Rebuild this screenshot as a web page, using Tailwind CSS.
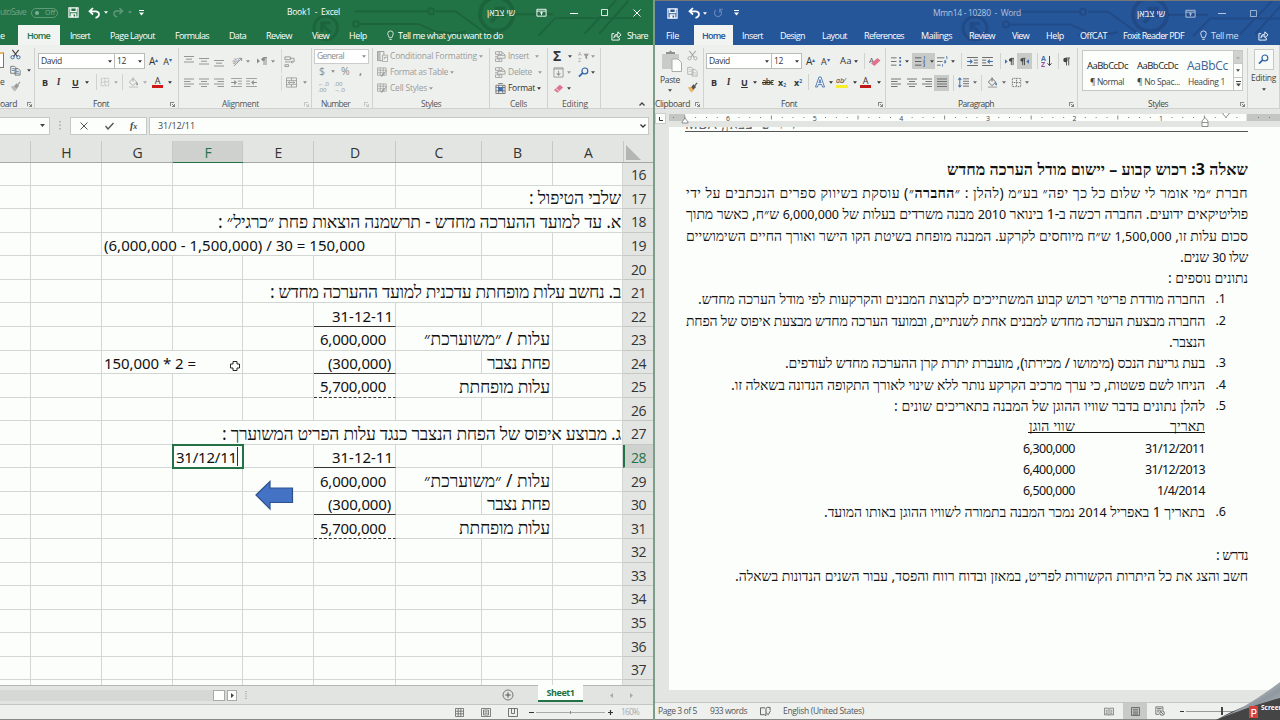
<!DOCTYPE html>
<html lang="en">
  <head>
    <meta charset="UTF-8" />
    <meta name="viewport" content="width=device-width, initial-scale=1.0" />
    <script src="https://cdn.jsdelivr.net/npm/@tailwindcss/browser@4"></script>
    <title>Book1 - Excel</title>
  </head>
  <body class="w-[1280px] h-[720px] overflow-hidden bg-[#e3e5e3] font-['Open_Sans','Noto_Sans',sans-serif] text-[8.5px] leading-none text-[#444]">

    <!-- icons -->
    <svg class="hidden">
      <symbol id="caret" viewBox="0 0 5 3"><path d="M0 0h5L2.500 3z" fill="currentColor"/></symbol>
      <symbol id="launch" viewBox="0 0 6 6"><path d="M.5 5V.5H5M2.500 2.500l2.500 2.500M5.500 2.500v3h-3" fill="none" stroke="currentColor" stroke-width=".8"/></symbol>
      <symbol id="save" viewBox="0 0 12 12"><path d="M1 1h10v10H1zM3 1v4h6V1M3.500 11V7.500h5V11" fill="none" stroke="currentColor" stroke-width="1.300"/><path d="M4 8h2v3H4z" fill="currentColor"/></symbol>
      <symbol id="undo" viewBox="0 0 12 12"><path d="M5 1L1.500 4.300 5 7.500M1.500 4.300H8q3 .3 3 3t-3.500 3.500" fill="none" stroke="currentColor" stroke-width="1.700"/></symbol>
      <symbol id="redo" viewBox="0 0 12 12"><path d="M7 1l3.500 3.300L7 7.500M10.500 4.300H4q-3 .3-3 3t3.500 3.500" fill="none" stroke="currentColor" stroke-width="1.500"/></symbol>
      <symbol id="repeat" viewBox="0 0 12 12"><path d="M8.500 2.500a4.300 4.300 0 1 1-5 0M8 5.500V1.500h4" fill="none" stroke="currentColor" stroke-width="1.400"/></symbol>
      <symbol id="qat" viewBox="0 0 5 6"><path d="M0 .5h5" stroke="currentColor"/><path d="M0 2.500h5L2.500 5.500z" fill="currentColor"/></symbol>
      <symbol id="ribbonopt" viewBox="0 0 12 12"><path d="M1 2.500h10v7.500H1zM1 4.500h10M6 9V5.500M4.300 7L6 5.500 7.700 7" fill="none" stroke="currentColor"/></symbol>
      <symbol id="min" viewBox="0 0 8 8"><path d="M0 4.500h8" stroke="currentColor"/></symbol>
      <symbol id="max" viewBox="0 0 8 8"><path d="M.5 .5h7v7h-7z" fill="none" stroke="currentColor"/></symbol>
      <symbol id="close" viewBox="0 0 8 8"><path d="M.5 .5l7 7M7.500 .5l-7 7" stroke="currentColor"/></symbol>
      <symbol id="bulb" viewBox="0 0 8 12"><path d="M2.500 8.500C2.500 7 .8 6 .8 4a3.200 3.200 0 0 1 6.400 0c0 2-1.700 3-1.700 4.500zM2.700 10.500h2.600" fill="none" stroke="currentColor" stroke-width=".9"/></symbol>
      <symbol id="share" viewBox="0 0 12 12"><path d="M3.500 4H1v7h8V8.500M3 8.500q.5-4 4.500-4V2L11 5.300 7.500 8.500V6.300Q4.500 6 3 8.500z" fill="none" stroke="currentColor"/></symbol>
      <symbol id="cut" viewBox="0 0 12 12"><path d="M2.500 1l5.500 7M9.500 1L4 8" stroke="currentColor" stroke-width="1.200"/><g fill="none" stroke="var(--c)"><circle cx="2.800" cy="9" r="1.800"/><circle cx="9.200" cy="9" r="1.800"/></g></symbol>
      <symbol id="copy" viewBox="0 0 12 12"><path d="M.8 1.500H5l1.500 1.500v6H.8zM5.500 4H9l2 2v5H5.500z" fill="#f2f4f2" stroke="currentColor" stroke-width=".9"/><path d="M2 4h3M2 6h3M6.800 7H9.500M6.800 9h3" stroke="var(--c)" stroke-width=".8"/></symbol>
      <symbol id="brush" viewBox="0 0 12 12"><path d="M1 6l4-1 3 3-2.500 3.500Q3 10.500 1 6z" fill="var(--c)"/><path d="M5.500 5.500L7 3.500l2 2-2 2zM8.500 4l2.500-3" fill="currentColor" stroke="currentColor" stroke-width="1.300"/></symbol>
      <symbol id="borders" viewBox="0 0 12 12"><path d="M1.500 1.500h9v9h-9zM6 1.500v9M1.500 6h9" fill="none" stroke="currentColor" stroke-dasharray="1 .8"/></symbol>
      <symbol id="bucket" viewBox="0 0 12 12"><path d="M5.500 1.500l4 4-4 4-4-4zM5.500 5V.5" fill="none" stroke="currentColor"/><path d="M9.500 5q1.800 2.500 1 4-1.500.5-1.500-1z" fill="var(--c)"/><path d="M1 11h10" stroke="currentColor" stroke-width="1.500" opacity=".45"/></symbol>
      <symbol id="left" viewBox="0 0 10 10"><path d="M0 1h10M0 3.500h6.500M0 6h10M0 8.500h6.500" stroke="currentColor" stroke-width=".9"/></symbol>
      <symbol id="center" viewBox="0 0 10 10"><path d="M0 1h10M2 3.500h6M0 6h10M2 8.500h6" stroke="currentColor" stroke-width=".9"/></symbol>
      <symbol id="right" viewBox="0 0 10 10"><path d="M0 1h10M3.500 3.500H10M0 6h10M3.500 8.500H10" stroke="currentColor" stroke-width=".9"/></symbol>
      <symbol id="justify" viewBox="0 0 10 10"><path d="M0 1h10M0 3.500h10M0 6h10M0 8.500h10" stroke="currentColor" stroke-width=".9"/></symbol>
      <symbol id="three" viewBox="0 0 10 7"><path d="M0 .5h10M2 3.200h6M0 6h10" stroke="currentColor" stroke-width=".9"/></symbol>
      <symbol id="indent" viewBox="0 0 12 10"><path d="M0 .5h12M0 9.500h12M7.500 3.500H12M7.500 6.500H12" stroke="currentColor" stroke-width=".9"/><path d="M0 5h5M3.500 3l2 2-2 2" fill="none" stroke="var(--c)" stroke-width="1.300"/></symbol>
      <symbol id="outdent" viewBox="0 0 12 10"><path d="M0 .5h12M0 9.500h12M0 3.500h4.500M0 6.500h4.500" stroke="currentColor" stroke-width=".9"/><path d="M12 5H7M8.500 3l-2 2 2 2" fill="none" stroke="var(--c)" stroke-width="1.300"/></symbol>
      <symbol id="orient" viewBox="0 0 12 12"><path d="M2 11l8.500-8.500M7.500 2.500h3v3" fill="none" stroke="currentColor"/><text x="0" y="8" font-size="7" fill="currentColor" transform="rotate(-35 3 6)">ab</text></symbol>
      <symbol id="ltr" viewBox="0 0 10 10"><path d="M0 2.500L3 5 0 7.500z" fill="var(--c)"/><path d="M7 9V1.500M9 9V1.500M10 1.500H6.500" stroke="currentColor" fill="none"/><circle cx="6.200" cy="3.200" r="1.800" fill="currentColor"/></symbol>
      <symbol id="rtl" viewBox="0 0 10 10"><path d="M10 2.500L7 5l3 2.500z" fill="var(--c)"/><path d="M3 9V1.500M5 9V1.500M6 1.500H2.500" stroke="currentColor" fill="none"/><circle cx="2.200" cy="3.200" r="1.800" fill="currentColor"/></symbol>
      <symbol id="pilcrow" viewBox="0 0 8 10"><path d="M4 9.500V1M6.500 9.500V1M8 1H3.500" stroke="currentColor" fill="none"/><circle cx="2.800" cy="3.300" r="2.500" fill="currentColor"/></symbol>
      <symbol id="wrap" viewBox="0 0 12 12"><path d="M1 1h6v3H1zM1 6.500h6M1 9.500h4v2H1zM7 2.500h4v4H7.500M9 5L7.500 6.500 9 8" fill="none" stroke="currentColor" stroke-width=".9"/></symbol>
      <symbol id="merge" viewBox="0 0 12 12"><path d="M.5 1h11v10H.5zM.5 4h11M.5 8h11M6 1v3M6 8v3M2.500 6h7M4 5L2.500 6 4 7M8 5l1.500 1L8 7" fill="none" stroke="currentColor" stroke-width=".8"/></symbol>
      <symbol id="condfmt" viewBox="0 0 12 12"><path d="M.5 .5h7v10h-7z" fill="none" stroke="currentColor"/><path d="M1 1h3v9H1z" fill="currentColor" opacity=".6"/><path d="M6 4.500h5.500v7H6zM7.500 9.500l2.500-3.500M7 7h3.500" fill="#f2f4f2" stroke="currentColor" stroke-width=".8"/></symbol>
      <symbol id="tablefmt" viewBox="0 0 12 12"><path d="M.5 1h9.500v8H.5zM.5 3.500H10M.5 6.300H8M3.500 1v8M6.800 1v6" fill="none" stroke="currentColor" stroke-width=".8"/><path d="M11.500 3L7 9l-3 2.500L5.500 8z" fill="currentColor"/></symbol>
      <symbol id="cells" viewBox="0 0 12 12"><path d="M.5 .8h4v3h-4zM4.500 .8h3v3h-3M3 4.800h8v3H3zM.5 8.500h4v3h-4zM4.500 8.500h3v3h-3" fill="none" stroke="currentColor" stroke-width=".9"/><path d="M0 6.300h3M8 1.500l3 3" stroke="currentColor"/></symbol>
      <symbol id="format" viewBox="0 0 12 12"><path d="M1 2.500h10v9H1zM1 5h10M1 8.500h10M4 2.500v9M8.500 2.500v9M3.500 .6h5" fill="none" stroke="#666" stroke-width=".9"/><path d="M3.500 4.500h5v4.500h-5z" fill="#3f6fae"/></symbol>
      <symbol id="sortf" viewBox="0 0 12 12"><text x="0" y="5.500" font-size="6" fill="currentColor">A</text><text x="0" y="11.500" font-size="6" fill="currentColor">Z</text><path d="M6 3h6L10 6v3L8 8V6z" fill="currentColor"/></symbol>
      <symbol id="sortw" viewBox="0 0 12 12"><text x="0" y="5.800" font-size="7" font-weight="700" fill="#3f6fae">A</text><text x="0" y="12" font-size="7" font-weight="700" fill="#9a4f9a">Z</text><path d="M8.500 1v9.500M6.500 8.300l2 2.200 2-2.200" fill="none" stroke="#444"/></symbol>
      <symbol id="filldn" viewBox="0 0 12 12"><path d="M1 1h10v10H1z" fill="none" stroke="currentColor"/><path d="M1 1h10v2H1z" fill="currentColor" opacity=".6"/><path d="M6 4v5M4 7l2 2 2-2" fill="none" stroke="currentColor" stroke-width="1.200"/></symbol>
      <symbol id="find" viewBox="0 0 12 12"><circle cx="7.500" cy="4.300" r="3.200" fill="none" stroke="#2f64a8" stroke-width="1.300"/><path d="M5 6.700L1 10.500" stroke="#2f64a8" stroke-width="1.800"/></symbol>
      <symbol id="eraser" viewBox="0 0 12 12"><path d="M1 7.500L7.500 2l3.500 3-6 5.500z" fill="#e0748f"/><path d="M3 6l4 3" stroke="#fff" stroke-width=".8"/></symbol>
      <symbol id="clear" viewBox="0 0 12 12"><text x="0" y="7.500" font-size="8" fill="#555">A</text><path d="M2 8.500L8.500 3l3 2.500-6 5.500z" fill="#e0748f"/></symbol>
      <symbol id="bullets" viewBox="0 0 12 12"><path d="M0 2h6M0 6h6M0 10h6" stroke="#666"/><path d="M9 1h2v2H9zM9 5h2v2H9zM9 9h2v2H9z" fill="#3f6fae"/></symbol>
      <symbol id="numbers" viewBox="0 0 12 12"><path d="M0 2h7M0 6h7M0 10h7" stroke="#555"/><path d="M9.500 .5h1v3M9 4.500h1.500v1.500H9.500v1.300h1.500M9 8.500h1.500v3H9M9.500 10h1" fill="none" stroke="#3f6fae" stroke-width=".8"/></symbol>
      <symbol id="multi" viewBox="0 0 12 12"><path d="M0 2h8M0 6h6M0 10h4" stroke="#666"/><path d="M10 .5h.8v3M8 5h1.500v2.500H8V6.300h1.500M6 9v2.500" fill="none" stroke="#3f6fae" stroke-width=".9"/></symbol>
      <symbol id="spacing" viewBox="0 0 12 12"><path d="M2 1v10M.3 3L2 1l1.700 2M.3 9L2 11l1.700-2" fill="none" stroke="#3f6fae" stroke-width="1.100"/><path d="M5.500 2H12M5.500 4.700H12M5.500 7.300H12M5.500 10H12" stroke="#666"/></symbol>
      <symbol id="clip" viewBox="0 0 20 22"><path d="M0 4h17v15H0z" fill="#c9cbc9"/><path d="M4 4V2h3q1.500-3 3 0h3v2H4z" fill="#8e908e"/><path d="M10 9h6l3.500 3.500v9H10z" fill="#fcfcfc" stroke="#aaa"/></symbol>
      <symbol id="book" viewBox="0 0 12 10"><path d="M.5 1H5l1 1 1-1h4.500v8H7L6 9.500 5 9H.5zM6 2v7M2 3.500h2.500M2 5.500h2.500M2 7.200h2.500M7.500 3.500H10M7.500 5.500H10M7.500 7.200H10" fill="none" stroke="currentColor" stroke-width=".8"/></symbol>
      <symbol id="proof" viewBox="0 0 12 12"><path d="M5.500 2H.5v7.500H5l1.500 1V2.500L8 1.500h3v3M7 7.500l2 2L11.500 5" fill="none" stroke="currentColor"/></symbol>
      <symbol id="pageview" viewBox="0 0 10 10"><path d="M.5 .5h9v9h-9zM2 2.500h6M2 4.500h6M2 6.500h6M2 8h6" fill="none" stroke="currentColor" stroke-width=".9"/></symbol>
      <symbol id="web" viewBox="0 0 12 12"><path d="M9.500 5V1H1v9h4M2.500 3h5.500M2.500 5H7M2.500 7H5" fill="none" stroke="currentColor" stroke-width=".9"/><circle cx="8.500" cy="8.500" r="2.700" fill="none" stroke="currentColor"/><path d="M7 7l3 3" stroke="currentColor"/></symbol>
      <symbol id="gridview" viewBox="0 0 9 9"><path d="M.5 .5h8v8h-8zM.5 3.200h8M.5 5.800h8M3.200 .5v8M5.800 .5v8" fill="none" stroke="currentColor" stroke-width=".8"/></symbol>
      <symbol id="pagelay" viewBox="0 0 10 9"><path d="M.5 .5h9v8h-9zM2.500 2h5v5h-5zM3.500 3.800h3M3.500 5.300h3" fill="none" stroke="currentColor" stroke-width=".8"/></symbol>
      <symbol id="pagebrk" viewBox="0 0 10 9"><path d="M.5 .5h9v8h-9zM3.500 .5v5M6.500 .5v5h-3" fill="none" stroke="currentColor" stroke-width=".9"/></symbol>
      <!-- circuit pattern behind both title bars -->
      <symbol id="circuit" viewBox="0 0 350 45"><g fill="none" stroke="#000" stroke-opacity=".13" stroke-width="2">
        <path d="M45 11h74M128 11h20l30 22 18 2M50 24H110l18 8 25 2M118 35h20l20-3"/><circle cx="123" cy="11" r="3"/><circle cx="46" cy="24" r="3"/>
        <circle cx="190" cy="14" r="17" stroke-width="4"/><path d="M184 22l12-12M188 8h9v9" stroke-width="4"/><circle cx="15" cy="28" r="12" stroke-width="3"/><path d="M20 33l-9-9M11 32v-9h9" stroke-width="3"/>
        <path d="M233 36l17-18h85M280 34L312 0M295 34L325 0M208 14h40"/></g></symbol>
    </svg>

    <div class="flex h-full">
      <!-- ================= Excel ================= -->
      <section class="w-[655px] h-full flex flex-col border-r-2 border-[#7d9c8a] bg-[#e3e5e3] [--c:#8a8c8a]">
        <header class="relative h-[45px] bg-[#217346] text-white">
          <svg class="absolute left-[311px] top-0 w-[342px] h-[45px]" preserveAspectRatio="none"><use href="#circuit"/></svg>
          <div class="relative h-[25px] grid items-center grid-cols-[31px_37px_20px_16px_9px_15px_11px_148px_200px_49px_34px_31px_32px_1fr]">
            <span data-w="26" class="text-[#6fa287]">utoSave</span>
            <span class="flex items-center w-[27px] h-[10px] rounded-full border border-[#5f9a7a] text-[7px] text-[#7fae95] gap-[6px] pl-[3px]"><i class="size-1 rounded-full bg-[#7fae95]"></i>Off</span>
            <svg class="size-[11px]"><use href="#save"/></svg>
            <svg class="size-3"><use href="#undo"/></svg>
            <svg class="w-[4px] h-[3px]"><use href="#caret"/></svg>
            <svg class="size-[11px] text-[#5f9a7a]"><use href="#redo"/></svg>
            <svg class="w-[4px] h-[3px] text-[#5f9a7a]"><use href="#caret"/></svg>
            <svg class="w-[5px] h-[6px]"><use href="#qat"/></svg>
            <span data-w="53" class="whitespace-pre">Book1  -  Excel</span>
            <span data-w="28" dir="rtl" class="text-[9px]">שי צבאן</span>
            <svg class="size-[11px]"><use href="#ribbonopt"/></svg>
            <svg class="size-2"><use href="#min"/></svg>
            <svg class="size-[7px]"><use href="#max"/></svg>
            <svg class="size-[8px]"><use href="#close"/></svg>
          </div>
          <nav class="relative h-5 grid items-center grid-cols-[18px_52px_40px_65px_54px_37px_46px_37px_40px_9px_213px_16px_1fr] text-[9px]">
            <span>e</span>
            <span class="w-[42px] h-5 bg-[#f2f4f2] text-[#217346] font-semibold flex items-center pl-[9px]"><b data-w="23" class="font-semibold">Home</b></span>
            <span data-w="20">Insert</span><span data-w="45">Page Layout</span><span data-w="34">Formulas</span><span data-w="17">Data</span><span data-w="26">Review</span><span data-w="17">View</span><span data-w="18">Help</span>
            <svg class="w-[7px] h-[11px] -ml-[2px]"><use href="#bulb"/></svg>
            <span data-w="105">Tell me what you want to do</span>
            <svg class="size-[11px]"><use href="#share"/></svg>
            <span data-w="21">Share</span>
          </nav>
        </header>

        <div class="flex h-[64px] bg-[#eef0ee] border-b border-[#d0d2d0]">
          <div class="w-[35px] flex flex-col border-r border-[#d0d2d0] my-[2px] mt-[3px] -mb-px">
            <div class="flex flex-1">
              <div class="w-[10px] pt-[4px] flex flex-col gap-[10px]">
                <span class="w-1 h-4 border border-l-0 border-t-2 border-[#777] border-t-[#e8b667] bg-white"></span><span>e</span>
              </div>
              <div class="flex flex-col pt-[1px] gap-[5px]">
                <svg class="size-[11px] text-[#444] [--c:#2f64a8]"><use href="#cut"/></svg>
                <div class="flex items-center gap-[6px]"><svg class="size-[11px] text-[#666] [--c:#2f64a8]"><use href="#copy"/></svg><svg class="w-1 h-[3px]"><use href="#caret"/></svg></div>
                <svg class="size-[11px] text-[#999] [--c:#bbb]"><use href="#brush"/></svg>
              </div>
            </div>
            <div class="h-[10px] flex items-center gap-[10px]"><span data-w="17">oard</span><svg class="size-[5px]"><use href="#launch"/></svg></div>
          </div>

          <div class="w-[144px] flex flex-col border-r border-[#d0d2d0] mt-[3px] -mb-px pl-[3px]">
            <div class="flex items-center h-[16px] mt-[5px] text-[#333]">
              <div class="w-[77px] h-4 border border-[#bbb] bg-white flex items-center justify-between px-[2px]"><span data-w="21">David</span><svg class="w-1 h-[3px]"><use href="#caret"/></svg></div>
              <div class="w-[30px] h-4 border border-l-0 border-[#bbb] bg-white flex items-center justify-between px-[2px]"><span data-w="9">12</span><svg class="w-1 h-[3px]"><use href="#caret"/></svg></div>
              <span class="ml-[4px] text-[10px]">A<sup class="text-[6px] text-[#2f64a8]">▴</sup></span><span class="ml-[5px] text-[9px]">A<sup class="text-[6px] text-[#2f64a8]">▾</sup></span>
            </div>
            <div class="grid items-center h-[26px] grid-cols-[15px_15px_13px_11px_4px_14px_8px_6px_15px_9px_14px_1fr] pl-[4px] text-[9px] text-[#333]">
              <b>B</b><i class="font-serif font-bold">I</i><u class="font-bold">U</u><svg class="w-1 h-[3px]"><use href="#caret"/></svg>
              <i class="w-px h-4 bg-[#d0d2d0]"></i><svg class="size-[10px] text-[#aaa]"><use href="#borders"/></svg><svg class="w-1 h-[3px] text-[#aaa]"><use href="#caret"/></svg>
              <i class="w-px h-4 bg-[#d0d2d0]"></i><svg class="size-[11px] text-[#aaa]"><use href="#bucket"/></svg><svg class="w-1 h-[3px] text-[#aaa]"><use href="#caret"/></svg>
              <span class="w-[11px] border-b-[3px] border-[#d01818] text-center text-[9px] leading-[9px]">A</span><svg class="w-1 h-[3px] ml-[2px]"><use href="#caret"/></svg>
            </div>
            <div class="h-[10px] mt-[4px] grid items-center grid-cols-[55px_77px_1fr]"><span></span><span data-w="16">Font</span><svg class="size-[5px]"><use href="#launch"/></svg></div>
          </div>

          <div class="w-[133px] flex flex-col border-r border-[#d0d2d0] mt-[3px] -mb-px pl-[5px] text-[#8a8c8a]">
            <div class="grid items-center h-[26px] grid-cols-[15px_15px_18px_14px_11px_14px_10px_3px_1fr]">
              <svg class="w-[10px] h-[7px] -mt-[4px]"><use href="#three"/></svg><svg class="w-[10px] h-[7px]"><use href="#three"/></svg><svg class="w-[10px] h-[7px] mt-[5px]"><use href="#three"/></svg>
              <svg class="size-[11px]"><use href="#orient"/></svg><svg class="w-1 h-[3px]"><use href="#caret"/></svg><svg class="size-[10px]"><use href="#ltr"/></svg><svg class="w-1 h-[3px]"><use href="#caret"/></svg>
              <i class="w-px h-6 bg-[#d6d8d6]"></i><svg class="size-[11px]"><use href="#wrap"/></svg>
            </div>
            <div class="grid items-center h-[17px] grid-cols-[15px_15px_17px_15px_35px_5px_17px_1fr]">
              <svg class="size-[10px]"><use href="#left"/></svg><svg class="size-[10px]"><use href="#center"/></svg><svg class="size-[10px]"><use href="#right"/></svg>
              <svg class="w-[11px] h-[9px]"><use href="#indent"/></svg><svg class="w-[11px] h-[9px]"><use href="#outdent"/></svg><i class="w-px h-4 bg-[#d6d8d6]"></i><svg class="size-[11px]"><use href="#merge"/></svg><svg class="w-1 h-[3px]"><use href="#caret"/></svg>
            </div>
            <div class="h-[10px] mt-[8px] grid items-center grid-cols-[38px_82px_1fr] text-[#555]"><span></span><span data-w="37">Alignment</span><svg class="size-[5px] text-[#aaa]"><use href="#launch"/></svg></div>
          </div>

          <div class="w-[61px] flex flex-col border-r border-[#d0d2d0] mt-[3px] -mb-px pl-[2px] text-[#8a8c8a]">
            <div class="w-[55px] h-[15px] mt-px border border-[#ccc] bg-white flex items-center justify-between px-[2px]"><span data-w="27">General</span><svg class="w-1 h-[3px]"><use href="#caret"/></svg></div>
            <div class="grid items-center h-[15px] grid-cols-[12px_10px_18px_1fr] pl-[5px] text-[10.5px]"><span>$</span><svg class="w-1 h-[3px]"><use href="#caret"/></svg><span>%</span><b>,</b></div>
            <div class="flex gap-[5px] h-[16px] items-center pl-[4px] text-[6px] leading-[6px]"><span>←.0<br />.00</span><span>.00<br />→.0</span></div>
            <div class="h-[10px] mt-[4px] grid items-center grid-cols-[7px_43px_1fr] text-[#555]"><span></span><span data-w="29">Number</span><svg class="size-[5px] text-[#aaa]"><use href="#launch"/></svg></div>
          </div>

          <div class="w-[117px] flex flex-col border-r border-[#d0d2d0] mt-[3px] -mb-px pl-[4px] text-[#9a9c9a]">
            <div class="h-4 flex items-center gap-[2px]"><svg class="size-[11px]"><use href="#condfmt"/></svg><span data-w="87">Conditional Formatting</span><svg class="w-1 h-[3px]"><use href="#caret"/></svg></div>
            <div class="h-4 flex items-center gap-[2px]"><svg class="size-[11px]"><use href="#tablefmt"/></svg><span data-w="58">Format as Table</span><svg class="w-1 h-[3px]"><use href="#caret"/></svg></div>
            <div class="h-4 flex items-center gap-[2px]"><svg class="size-[11px]"><use href="#tablefmt"/></svg><span data-w="37">Cell Styles</span><svg class="w-1 h-[3px]"><use href="#caret"/></svg></div>
            <div class="h-[10px] mt-[3px] pl-[44px] flex items-center text-[#555]"><span data-w="20">Styles</span></div>
          </div>

          <div class="w-[58px] flex flex-col border-r border-[#d0d2d0] mt-[3px] -mb-px pl-[5px] text-[#9a9c9a]">
            <div class="h-4 flex items-center gap-[2px]"><svg class="size-[11px]"><use href="#cells"/></svg><span data-w="21">Insert</span><svg class="w-1 h-[3px] ml-[4px]"><use href="#caret"/></svg></div>
            <div class="h-4 flex items-center gap-[2px]"><svg class="size-[11px]"><use href="#cells"/></svg><span data-w="24">Delete</span><svg class="w-1 h-[3px] ml-[4px]"><use href="#caret"/></svg></div>
            <div class="h-4 flex items-center gap-[2px] text-[#333]"><svg class="size-[11px]"><use href="#format"/></svg><span data-w="27">Format</span><svg class="w-1 h-[3px]"><use href="#caret"/></svg></div>
            <div class="h-[10px] mt-[3px] pl-[15px] flex items-center text-[#555]"><span data-w="17">Cells</span></div>
          </div>

          <div class="w-[53px] flex flex-col border-r border-[#d0d2d0] mt-[3px] -mb-px pl-[5px]">
            <div class="h-4 grid items-center grid-cols-[15px_10px_13px_1fr]"><span class="text-[14px] font-bold text-[#333] leading-4">Σ</span><svg class="w-1 h-[3px]"><use href="#caret"/></svg><svg class="size-[11px] text-[#999]"><use href="#sortf"/></svg><svg class="w-1 h-[3px] text-[#999]"><use href="#caret"/></svg></div>
            <div class="h-4 grid items-center grid-cols-[14px_11px_13px_1fr]"><svg class="size-[11px] text-[#999]"><use href="#filldn"/></svg><svg class="w-1 h-[3px] text-[#999]"><use href="#caret"/></svg><svg class="size-[11px]"><use href="#find"/></svg><svg class="w-1 h-[3px]"><use href="#caret"/></svg></div>
            <div class="h-4 grid items-center grid-cols-[14px_1fr]"><svg class="size-[11px]"><use href="#eraser"/></svg><svg class="w-1 h-[3px]"><use href="#caret"/></svg></div>
            <div class="h-[10px] mt-[3px] pl-[9px] flex items-center text-[#555]"><span data-w="26">Editing</span></div>
          </div>
          <svg class="size-[6px] ml-[38px] mt-[56px]" viewBox="0 0 6 6"><path d="M.5 4.500L3 2l2.500 2.500" fill="none" stroke="#444" stroke-width="1.300"/></svg>
        </div>

        <!-- formula bar -->
        <div class="h-[32px] flex items-center pt-px">
          <div class="w-[50px] h-[18px] bg-[#fcfefc] border border-l-0 border-[#c6c8c6] flex items-center justify-end pr-[4px]"><svg class="w-[5px] h-[3px]"><use href="#caret"/></svg></div>
          <svg class="w-[2px] h-[9px] ml-[9px]" viewBox="0 0 2 9"><path d="M1 0v1.500M1 3.500V5M1 7v1.500" stroke="#888"/></svg>
          <div class="ml-[9px] w-[77px] h-[18px] bg-[#fcfefc] border border-[#c6c8c6] grid items-center grid-cols-[25px_25px_1fr] pl-[9px]">
            <svg class="size-2 text-[#555]"><use href="#close"/></svg>
            <svg class="w-[9px] h-2" viewBox="0 0 9 8"><path d="M.5 4L3 7l5.500-6" fill="none" stroke="#555" stroke-width="1.400"/></svg>
            <i class="font-['Liberation_Serif',serif] text-[10px] font-bold">f<span class="text-[8px]">x</span></i>
          </div>
          <div class="ml-[2px] w-[500px] h-[18px] bg-[#fcfefc] border border-[#c6c8c6] flex items-center justify-between pl-[8px] pr-[2px] text-[9px]"><span data-w="37">31/12/11</span><svg class="size-[6px]" viewBox="0 0 6 6"><path d="M.5 1.500L3 4l2.500-2.500" fill="none" stroke="#333" stroke-width="1.300"/></svg></div>
        </div>

        <div id="colHeads" class="h-[22px] grid grid-cols-[31px_71px_71px_70px_71px_82px_86px_71px_71px_1fr] border-b border-[#a6a8a6] text-[14px] text-[#333]"></div>

        <div class="relative h-[522px] overflow-hidden bg-[#fcfefc]">
          <div id="sheet" class="-mt-px"></div>
          <!-- block arrow -->
          <svg class="absolute left-[255px] top-[317px] w-[39px] h-[31px]" viewBox="0 0 39 31"><path d="M1 15L15 1.500V8H37.500V22.500H15V29z" fill="#4472c4" stroke="#2f528f" stroke-width="1.200"/></svg>
          <!-- cell cursor -->
          <svg class="absolute left-[229px] top-[197px] size-3" viewBox="0 0 12 12"><path d="M4 1.500h4V4h2.500v4H8v2.500H4V8H1.500V4H4z" fill="#fff" stroke="#222"/></svg>
        </div>

        <div class="h-[19px] flex items-center border-t border-[#b5b7b5] bg-[#e2e4e2]">
          <div class="w-[237px] h-[11px] flex justify-end gap-[2px] bg-[#d6d8d6]"><i class="w-[12px] h-[11px] bg-white border border-[#aaa]"></i><span class="w-[10px] h-[11px] bg-white border border-[#aaa] grid place-items-center"><svg class="w-[3px] h-[5px]" viewBox="0 0 3 5"><path d="M0 0l3 2.500L0 5z" fill="#444"/></svg></span></div>
          <svg class="w-[2px] h-[8px] ml-[8px]" viewBox="0 0 2 8"><path d="M1 0v1M1 2.300v1M1 4.600v1M1 7v1" stroke="#888"/></svg>
          <svg class="size-[12px] ml-[255px]" viewBox="0 0 12 12"><circle cx="6" cy="6" r="5" fill="none" stroke="#777"/><path d="M3.300 6h5.400M6 3.300v5.400" stroke="#555"/></svg>
          <span class="ml-[24px] w-[45px] h-[17px] self-start -mt-px bg-[#fcfefc] border-b-2 border-[#217346] grid place-items-center font-bold text-[9px] text-[#217346]"><span data-w="28">Sheet1</span></span>
          <svg class="w-[3px] h-[5px] ml-[27px]" viewBox="0 0 3 5"><path d="M3 0L0 2.500 3 5z" fill="#aaa"/></svg>
          <svg class="w-[3px] h-[5px] ml-[17px]" viewBox="0 0 3 5"><path d="M0 0l3 2.500L0 5z" fill="#aaa"/></svg>
        </div>
        <div class="h-[16px] grid items-center border-t border-[#c4c6c4] border-b border-b-[#888] bg-[#eef0ee] grid-cols-[455px_26px_27px_21px_7px_69px_3px_13px_1fr] text-[#666]">
          <span></span><svg class="size-[9px]"><use href="#gridview"/></svg><svg class="w-[10px] h-[9px]"><use href="#pagelay"/></svg><svg class="w-[10px] h-[9px]"><use href="#pagebrk"/></svg>
          <i class="w-[5px] h-px bg-[#333]"></i><span class="h-px bg-[#aaa] flex justify-center"><i class="w-px h-[3px] -mt-px bg-[#888]"></i></span><span></span>
          <svg class="size-[5px]" viewBox="0 0 5 5"><path d="M0 2.500h5M2.500 0v5" stroke="#333" stroke-width="1.200"/></svg><span data-w="18" class="text-[#aaa]">160%</span>
        </div>
      </section>

      <!-- ================= Word ================= -->
      <section class="relative w-[625px] h-full flex flex-col bg-[#e3e5e3] [--c:#3f6fae]">
        <header class="relative h-[45px] bg-[#26569a] border-t border-[#777] text-white">
          <svg class="absolute left-[305px] top-0 w-[320px] h-[44px]" viewBox="0 0 320 45" preserveAspectRatio="none"><use href="#circuit" width="350" height="45"/></svg>
          <div class="relative h-[24px] grid items-center grid-cols-[12px_21px_15px_10px_20px_200px_204px_48px_33px_32px_1fr] text-[#b3c4de]">
            <span></span><svg class="size-[11px] text-white"><use href="#save"/></svg>
            <svg class="size-3 text-white"><use href="#undo"/></svg>
            <svg class="w-[4px] h-[3px] text-white"><use href="#caret"/></svg>
            <svg class="size-[10px] text-[#6384b6]"><use href="#repeat"/></svg>
            <svg class="w-[5px] h-[6px] text-white ml-px"><use href="#qat"/></svg>
            <span data-w="88" class="whitespace-pre">Mmn14 - 10280  -  Word</span>
            <span data-w="28" dir="rtl" class="text-[9px] text-white">שי צבאן</span>
            <svg class="size-[11px]"><use href="#ribbonopt"/></svg>
            <svg class="size-2"><use href="#min"/></svg>
            <svg class="size-[7px]"><use href="#max"/></svg>
          </div>
          <nav class="relative h-5 grid items-center grid-cols-[11px_28px_48px_38px_42px_42px_57px_48px_43px_34px_34px_43px_77px_11px_47px_1fr] text-[9px]">
            <span></span><span data-w="13">File</span>
            <span class="w-[39px] h-5 bg-[#f2f4f2] text-[#26569a] flex items-center pl-[8px]"><b data-w="23" class="font-semibold">Home</b></span>
            <span data-w="21">Insert</span><span data-w="25">Design</span><span data-w="25">Layout</span><span data-w="40">References</span><span data-w="31">Mailings</span><span data-w="26">Review</span><span data-w="17">View</span><span data-w="18">Help</span><span data-w="27">OffCAT</span><span data-w="61">Foxit Reader PDF</span>
            <svg class="w-[7px] h-[11px]"><use href="#bulb"/></svg>
            <span data-w="27" class="text-[#d5dfee]">Tell me</span>
            <svg class="size-[11px]"><use href="#share"/></svg>
          </nav>
        </header>

        <div class="flex h-[64px] bg-[#eef0ee] border-b border-[#d0d2d0]">
          <div class="w-[49px] flex flex-col border-r border-[#d0d2d0] mt-[3px] -mb-px">
            <div class="flex h-[51px]">
              <div class="w-[32px] flex flex-col items-center pt-[2px]">
                <svg class="w-5 h-[22px] ml-[2px]"><use href="#clip"/></svg>
                <span data-w="20" class="mt-[4px] ml-[-2px]">Paste</span><svg class="w-1 h-[3px] mt-[4px] -ml-[3px]"><use href="#caret"/></svg>
              </div>
              <div class="flex flex-col pt-[2px] gap-[5px]">
                <svg class="size-[11px] text-[#aaa] [--c:#aaa]"><use href="#cut"/></svg>
                <svg class="size-[11px] text-[#aaa] [--c:#bbb]"><use href="#copy"/></svg>
                <svg class="size-[11px] text-[#555] [--c:#e8b667]"><use href="#brush"/></svg>
              </div>
            </div>
            <div class="h-[10px] flex items-center gap-[5px]"><span data-w="35">Clipboard</span><svg class="size-[5px]"><use href="#launch"/></svg></div>
          </div>

          <div class="w-[182px] flex flex-col border-r border-[#d0d2d0] mt-[3px] -mb-px pl-[2px]">
            <div class="flex items-center h-[16px] mt-[5px] text-[#333]">
              <div class="w-[66px] h-4 border border-[#bbb] bg-white flex items-center justify-between px-[2px]"><span data-w="21">David</span><svg class="w-1 h-[3px]"><use href="#caret"/></svg></div>
              <div class="w-[30px] h-4 border border-l-0 border-[#bbb] bg-white flex items-center justify-between px-[2px]"><span data-w="9">12</span><svg class="w-1 h-[3px]"><use href="#caret"/></svg></div>
              <span class="w-[15px] ml-[4px] text-[10px]">A<sup class="text-[6px] text-[#2f64a8]">▴</sup></span><span class="w-[19px] text-[9px]">A<sup class="text-[6px] text-[#2f64a8]">▾</sup></span>
              <span data-w="12" class="text-[9.5px]">Aa</span><svg class="w-1 h-[3px] ml-[2px]"><use href="#caret"/></svg><i class="w-px h-4 bg-[#d0d2d0] ml-[6px]"></i><svg class="size-[12px] ml-[4px]"><use href="#clear"/></svg>
            </div>
            <div class="grid items-center h-[26px] grid-cols-[16px_14px_12px_9px_16px_16px_14px_6px_13px_9px_15px_9px_15px_1fr] pl-[5px] text-[9px] text-[#333]">
              <b>B</b><i class="font-serif font-bold">I</i><u class="font-bold">U</u><svg class="w-1 h-[3px]"><use href="#caret"/></svg>
              <s data-w="11" class="font-semibold text-[8px]">abc</s><b>x<sub class="text-[5px] text-[#2f64a8]">2</sub></b><b>x<sup class="text-[5px] text-[#2f64a8]">2</sup></b><i class="w-px h-4 bg-[#d0d2d0]"></i>
              <svg class="size-[12px]" viewBox="0 0 12 12"><path d="M1.500 11L5 1h2l3.500 10H8.500L7.700 8.500H4.300L3.500 11zM4.900 6.800h2.200L6 3.500z" fill="#fff" stroke="#3f6fae" stroke-width=".9"/></svg><svg class="w-1 h-[3px] ml-[2px]"><use href="#caret"/></svg>
              <span class="w-[12px] border-b-[3px] border-[#f5f02a] text-[7px] leading-[8px] italic">ab⁄</span><svg class="w-1 h-[3px] ml-[2px]"><use href="#caret"/></svg>
              <span class="w-[11px] border-b-[3px] border-[#c01818] text-center leading-[9px]">A</span><svg class="w-1 h-[3px] ml-[2px]"><use href="#caret"/></svg>
            </div>
            <div class="h-[10px] mt-[4px] grid items-center grid-cols-[75px_97px_1fr]"><span></span><span data-w="16">Font</span><svg class="size-[5px]"><use href="#launch"/></svg></div>
          </div>

          <div class="w-[192px] flex flex-col border-r border-[#d0d2d0] mt-[3px] -mb-px pl-[5px]">
            <div class="grid items-center h-[26px] grid-cols-[14px_7px_25px_14px_10px_6px_15px_18px_5px_12px_20px_4px_17px_5px_1fr]">
              <svg class="size-[11px]"><use href="#bullets"/></svg><svg class="w-1 h-[3px]"><use href="#caret"/></svg>
              <span class="w-[23px] h-4 bg-[#c8cac8] flex items-center gap-[4px] pl-[3px]"><svg class="size-[11px]"><use href="#numbers"/></svg><svg class="w-1 h-[3px]"><use href="#caret"/></svg></span>
              <svg class="size-[11px]"><use href="#multi"/></svg><svg class="w-1 h-[3px]"><use href="#caret"/></svg><i class="w-px h-4 bg-[#d0d2d0]"></i>
              <svg class="w-[11px] h-[9px]"><use href="#indent"/></svg><svg class="w-[11px] h-[9px]"><use href="#outdent"/></svg><i class="w-px h-4 bg-[#d0d2d0]"></i>
              <svg class="size-[9px]"><use href="#ltr"/></svg><span class="w-[15px] h-4 bg-[#c8cac8] grid place-items-center"><svg class="size-[9px]"><use href="#rtl"/></svg></span><i class="w-px h-4 bg-[#d0d2d0]"></i>
              <svg class="size-[12px]"><use href="#sortw"/></svg><i class="w-px h-4 bg-[#d0d2d0]"></i><svg class="w-[7px] h-[9px]"><use href="#pilcrow"/></svg>
            </div>
            <div class="grid items-center h-[17px] text-[#666] grid-cols-[16px_15px_12px_19px_5px_13px_10px_6px_15px_9px_14px_1fr]">
              <svg class="size-[10px]"><use href="#left"/></svg><svg class="size-[10px]"><use href="#center"/></svg><svg class="size-[10px]"><use href="#right"/></svg><span class="w-[15px] h-4 bg-[#c8cac8] grid place-items-center"><svg class="size-[10px]"><use href="#justify"/></svg></span>
              <i class="w-px h-4 bg-[#d0d2d0]"></i><svg class="size-[11px]"><use href="#spacing"/></svg><svg class="w-1 h-[3px] ml-[2px]"><use href="#caret"/></svg>
              <i class="w-px h-4 bg-[#d0d2d0]"></i><svg class="size-[11px]"><use href="#bucket"/></svg><svg class="w-1 h-[3px]"><use href="#caret"/></svg><svg class="size-[11px]"><use href="#borders"/></svg><svg class="w-1 h-[3px]"><use href="#caret"/></svg>
            </div>
            <div class="h-[10px] mt-[8px] grid items-center grid-cols-[67px_111px_1fr]"><span></span><span data-w="36">Paragraph</span><svg class="size-[5px]"><use href="#launch"/></svg></div>
          </div>

          <div class="w-[170px] flex flex-col border-r border-[#d0d2d0] mt-[3px] -mb-px pl-[4px]">
            <div class="w-[161px] h-[41px] mt-[2px] flex border border-[#c6c8c6] bg-[#fcfefc]">
              <div class="w-[50px] pl-[4px] pt-[9px]"><p data-w="41" class="text-[9.500px] leading-3 text-[#222]">AaBbCcDc</p><p data-w="34" class="mt-[6px] ml-[3px]">¶ Normal</p></div>
              <div class="w-[50px] pl-[4px] pt-[9px]"><p data-w="41" class="text-[9.500px] leading-3 text-[#222]">AaBbCcDc</p><p data-w="43" class="mt-[6px]">¶ No Spac...</p></div>
              <div class="w-[50px] pl-[4px] pt-[9px]"><p data-w="41" class="text-[12px] leading-3 text-[#3f6294]">AaBbCc</p><p data-w="37" class="mt-[6px] ml-px">Heading 1</p></div>
              <div class="flex-1 flex flex-col divide-y divide-[#c6c8c6] border-l border-[#c6c8c6]">
                <span class="flex-1 bg-[#d0d2d0] grid place-items-center"><svg class="w-1 h-[3px] rotate-180 text-[#aaa]"><use href="#caret"/></svg></span>
                <span class="flex-1 grid place-items-center"><svg class="w-1 h-[3px]"><use href="#caret"/></svg></span>
                <span class="flex-1 grid place-items-center"><svg class="w-[5px] h-[6px]"><use href="#qat"/></svg></span>
              </div>
            </div>
            <div class="h-[10px] mt-[8px] grid items-center grid-cols-[66px_92px_1fr]"><span></span><span data-w="20">Styles</span><svg class="size-[5px]"><use href="#launch"/></svg></div>
          </div>
          <div class="flex-1 flex flex-col items-center pt-[4px] border-r border-[#d0d2d0]">
            <span class="w-5 h-[21px] border border-[#c6c8c6] bg-[#f8faf8] grid place-items-center"><svg class="size-[11px]"><use href="#find"/></svg></span>
            <span data-w="25" class="mt-[4px]">Editing</span><svg class="w-1 h-[3px] mt-[5px]"><use href="#caret"/></svg>
          </div>
        </div>

        <!-- ruler -->
        <div class="h-[18px] flex pt-[4px]">
          <span class="w-[11px] h-[11px] bg-[#fcfefc] border border-[#ccc] grid place-items-center"><svg class="size-1" viewBox="0 0 4 4"><path d="M.5 0v3.500H4" fill="none" stroke="#333"/></svg></span>
          <svg id="ruler" class="w-[611px] h-[14px] ml-[3px]" viewBox="0 0 611 14">
            <path d="M0 1h16v7H0zM578 1h33v7h-33z" fill="#c4c6c4"/><path d="M16 1h561v7H16z" fill="#fcfefc"/>
          </svg>
        </div>

        <main class="h-[563px] ml-[14px] bg-[#fcfefc] overflow-hidden pl-4 pr-[32px] font-['Noto_Sans','Liberation_Serif',serif] text-[14px] text-[#111]" dir="rtl">
          <div class="h-[5px] flex items-end justify-end border-b border-[#555] overflow-hidden"><span data-w="111" class="h-[14px] leading-[14px] text-[#666]">ד״ר שי צבאן, MBA</span></div>
          <h1 data-w="301" class="mt-[25px] h-[24px] leading-[24px] text-[16px] font-bold">שאלה 3: רכוש קבוע – יישום מודל הערכה מחדש</h1>
          <div class="leading-[21.3px] w-[563px] mt-px [&_p]:h-[21.3px] [&_p>span]:leading-none">
            <p data-w="562">חברת ״מי אומר לי שלום כל כך יפה״ בע״מ (להלן : ״<b>החברה</b>״) עוסקת בשיווק ספרים הנכתבים על ידי</p>
            <p data-w="562">פוליטיקאים ידועים. החברה רכשה ב-1 בינואר <span class="text-[12.5px]">2010</span> מבנה משרדים בעלות של <span class="text-[12.5px]">6,000,000</span> ש״ח, כאשר מתוך</p>
            <p data-w="562">סכום עלות זו, <span class="text-[12.5px]">1,500,000</span> ש״ח מיוחסים לקרקע. המבנה מופחת בשיטת הקו הישר ואורך החיים השימושיים</p>
            <p data-w="68">שלו <span class="text-[12.5px]">30</span> שנים.</p>
            <p data-w="80">נתונים נוספים :</p>
            <div class="grid grid-cols-[43px_1fr] auto-rows-auto">
              <span class="h-[21.3px] pr-[22px] text-[12.5px]">1.</span><p data-w="507">החברה מודדת פריטי רכוש קבוע המשתייכים לקבוצת המבנים והקרקעות לפי מודל הערכה מחדש.</p>
              <span class="h-[21.3px] pr-[22px] text-[12.5px]">2.</span><p data-w="519">החברה מבצעת הערכה מחדש למבנים אחת לשנתיים, ובמועד הערכה מחדש מבצעת איפוס של הפחת</p>
              <span></span><p data-w="36">הנצבר.</p>
              <span class="h-[21.3px] pr-[22px] text-[12.5px]">3.</span><p data-w="420">בעת גריעת הנכס (מימושו / מכירתו), מועברת יתרת קרן ההערכה מחדש לעודפים.</p>
              <span class="h-[21.3px] pr-[22px] text-[12.5px]">4.</span><p data-w="474">הניחו לשם פשטות, כי ערך מרכיב הקרקע נותר ללא שינוי לאורך התקופה הנדונה בשאלה זו.</p>
              <span class="h-[21.3px] pr-[22px] text-[12.5px]">5.</span><p data-w="311">להלן נתונים בדבר שוויו ההוגן של המבנה בתאריכים שונים :</p>
              <span></span>
              <div>
                <div class="w-[177px] h-[17px] mb-[4.300px] border-b border-[#111] grid grid-cols-[130px_1fr] leading-[19px]"><span data-w="35">תאריך</span><span data-w="46">שווי הוגן</span></div>
                <div class="grid grid-cols-[130px_1fr] grid-rows-[21.3px_21.3px_21.3px] text-[12.5px]">
                  <span data-w="60">31/12/2011</span><span data-w="52">6,300,000</span>
                  <span data-w="60">31/12/2013</span><span data-w="52">6,400,000</span>
                  <span data-w="48">1/4/2014</span><span data-w="52">6,500,000</span>
                </div>
              </div>
              <span class="h-[21.3px] pr-[22px] text-[12.5px]">6.</span><p data-w="381">בתאריך 1 באפריל <span class="text-[12.5px]">2014</span> נמכר המבנה בתמורה לשוויו ההוגן באותו המועד.</p>
            </div>
            <p class="mt-[21.3px]" data-w="32">נדרש :</p>
            <p data-w="513">חשב והצג את כל היתרות הקשורות לפריט, במאזן ובדוח רווח והפסד, עבור השנים הנדונות בשאלה.</p>
          </div>
        </main>
        <div class="h-[12px]"></div>
        <footer class="h-[18px] grid items-center border-t border-[#c4c6c4] border-b border-b-[#888] bg-[#eef0ee] grid-cols-[3px_52px_50px_23px_321px_19px_32px_26px_5px_1fr] text-[#555]">
          <span></span><span data-w="39">Page 3 of 5</span><span data-w="37">933 words</span><svg class="size-[11px]"><use href="#proof"/></svg><span data-w="81">English (United States)</span>
          <svg class="w-[10px] h-[9px]"><use href="#book"/></svg><span class="w-6 h-4 bg-[#c8cac8] grid place-items-center"><svg class="size-[9px]"><use href="#pageview"/></svg></span><svg class="size-[10px]"><use href="#web"/></svg>
          <i class="w-1 h-px bg-[#333] -ml-px"></i><span class="w-[60px] h-px bg-[#999] flex items-center"><i class="w-[2px] h-2 ml-[35px] bg-[#444] shrink-0"></i></span>
        </footer>

        <!-- screen recorder page curl -->
        <div class="absolute right-0 bottom-0 w-[64px] h-[38px]">
          <svg class="w-full h-full" viewBox="0 0 64 38"><defs><linearGradient id="curl" x1="0" y1="0" x2="1" y2="1"><stop offset=".3" stop-color="#c9cdd0"/><stop offset=".6" stop-color="#8f989f"/><stop offset="1" stop-color="#c0c5c9"/></linearGradient></defs>
            <path d="M0 38Q18 28 30 24L64 14V38z" fill="#454545"/><path d="M2 37Q30 26 64 0V16Q40 22 2 37z" fill="url(#curl)"/><path d="M33 24h9v12h-9z" fill="#d8403a"/><path d="M36 35v-7.500h3q2 2.500 0 4h-3" fill="none" stroke="#fff" stroke-width="1.200"/></svg>
          <span class="absolute left-[45px] top-[23px] text-[6.500px] font-bold text-white">Screen</span>
        </div>
      </section>
    </div>

    <script>
      const cols = ["", "H", "G", "F", "E", "D", "C", "B", "A"];
      const he = "justify-end pr-px";

      // first column index, columns covered, text, text width, extra classes
      const block = (n) => ({
        [n]: [[5, 1, "31-12-11", 61, "justify-end pr-[2px] border-b-[#333]"]],
        [n + 1]: [[5, 1, "6,000,000", 66, "justify-end pr-[9px]"], [6, 2, "עלות / ״משוערכת״", 126, "justify-end pr-[2px]"]],
        [n + 2]: [[5, 1, "(300,000)", 63, "justify-end pr-[4px] border-b-[#333]"], [7, 1, "פחת נצבר", 63, "justify-end pr-[2px]"]],
        [n + 3]: [[5, 1, "5,700,000", 66, "justify-end pr-[9px] border-b-[#333] [border-bottom-style:dashed]"], [6, 2, "עלות מופחתת", 91, "justify-end pr-[2px]"]],
      });
      const cells = {
        17: [[7, 2, "שלבי הטיפול :", 92, he]],
        18: [[3, 6, "א. עד למועד ההערכה מחדש - תרשמנה הוצאות פחת ״כרגיל״ :", 403, he]],
        19: [[2, 4, "(6,000,000 - 1,500,000) / 30 = 150,000", 261, "pl-[2px]"]],
        21: [[4, 5, "ב. נחשב עלות מופחתת עדכנית למועד ההערכה מחדש :", 351, he]],
        27: [[3, 6, "ג. מבוצע איפוס של הפחת הנצבר כנגד עלות הפריט המשוערך :", 399, he]],
        ...block(22),
        ...block(28),
      };
      cells[24].unshift([2, 2, "150,000 * 2 =", 92, "pl-[2px]"]);
      cells[28].unshift([3, 1, "31/12/11", 61, "pl-[3px] outline-2 -outline-offset-1 outline-[#217346] z-10"]);

      const spans = ["", "col-span-1", "col-span-2", "col-span-3", "col-span-4", "col-span-5", "col-span-6"];

      // column letters
      document.getElementById("colHeads").innerHTML =
        cols.map((c) => `<span class="grid place-items-center border-r border-[#c6c8c6] pt-[3px] pl-px ${c === "F" ? "bg-[#cfd1cf] text-[#217346] shadow-[0_1px_0_#217346]" : ""}">${c}</span>`).join("") +
        `<svg class="w-4 h-4 mt-[4px] ml-[2px]" viewBox="0 0 16 16"><path d="M0 0v15h15z" fill="#b4b6b4"/></svg>`;

      // rows 16 to 38
      let html = "";
      for (let r = 16; r <= 38; r++) {
        html += `<div class="h-[23.57px] grid grid-cols-[31px_71px_71px_70px_71px_82px_86px_71px_70px_1fr] font-['Noto_Sans','Liberation_Serif',serif] text-[15px] text-[#111]">`;
        for (let c = 0; c < 9; c++) {
          const cell = (cells[r] || []).find((x) => x[0] === c);
          if (cell) {
            const rtl = /[א-ת]/.test(cell[2]);
            html += `<div class="${spans[cell[1]]} flex items-center border-r border-b border-[#d4d6d4] ${rtl ? "text-[17.5px] pt-[2px]" : "pt-[3px]"} ${cell[4]}"><span data-w="${cell[3]}" dir="${rtl ? "rtl" : "ltr"}">${cell[2]}</span>${r === 28 && c === 3 ? '<i class="w-px h-[19px] -mt-[3px] bg-[#333]"></i>' : ""}</div>`;
            c += cell[1] - 1;
          } else {
            html += `<div class="border-r border-b border-[#d4d6d4]"></div>`;
          }
        }
        html += `<div class="flex items-center justify-end pr-[7px] pt-[4px] border-b border-[#c6c8c6] text-[14px] font-['Open_Sans',sans-serif] ${r === 28 ? "bg-[#d0d2d0] text-[#217346] border-l-2 border-l-[#217346]" : "bg-[#e3e5e3] text-[#333]"}"><span data-w="15">${r}</span></div></div>`;
      }
      document.getElementById("sheet").innerHTML = html;

      // ruler marks: a number every 86.6px, a bar halfway, dots between
      let marks = "";
      for (let i = 0; i < 56; i++) {
        const x = 578.700 - i * 10.825;
        if (i % 8 === 0 && i > 0 && i < 50) marks += `<text x="${x - 2}" y="7.500" font-size="7" fill="#444">${i / 8}</text>`;
        else if (i % 8 === 4) marks += `<path d="M${x} 2.500v4" stroke="#888"/>`;
        else if (i > 0 && x > 16) marks += `<path d="M${x - 0.5} 4.500h1" stroke="#777"/>`;
      }
      marks += '<path d="M4 4.500h1M589 4.500h1M600 4.500h1" stroke="#777"/>';
      marks += '<path d="M13 9l3-4 3 4v1h-6zM554 -1h6v2l-3 3.500-3-3.500zM533 8l3-3.500 3 3.500v5.500h-6zM533 9.500h6" fill="#fcfefc" stroke="#777" stroke-width=".8"/>';
      document.getElementById("ruler").innerHTML += marks;

      // spread each label over its own width
      function fit() {
        document.querySelectorAll("[data-w]").forEach((el) => {
          el.style.letterSpacing = "0px";
          el.style.whiteSpace = "pre";
          el.style.width = "max-content";
          const gap = (el.dataset.w - el.getBoundingClientRect().width) / el.textContent.length;
          el.style.letterSpacing = gap + "px";
        });
      }

      // once more after styles and fonts have settled
      fit();
      window.addEventListener("load", () => {
        fit();
        requestAnimationFrame(fit);
        setTimeout(fit, 50);
      });
      document.fonts.ready.then(fit);
    </script>
  </body>
</html>
